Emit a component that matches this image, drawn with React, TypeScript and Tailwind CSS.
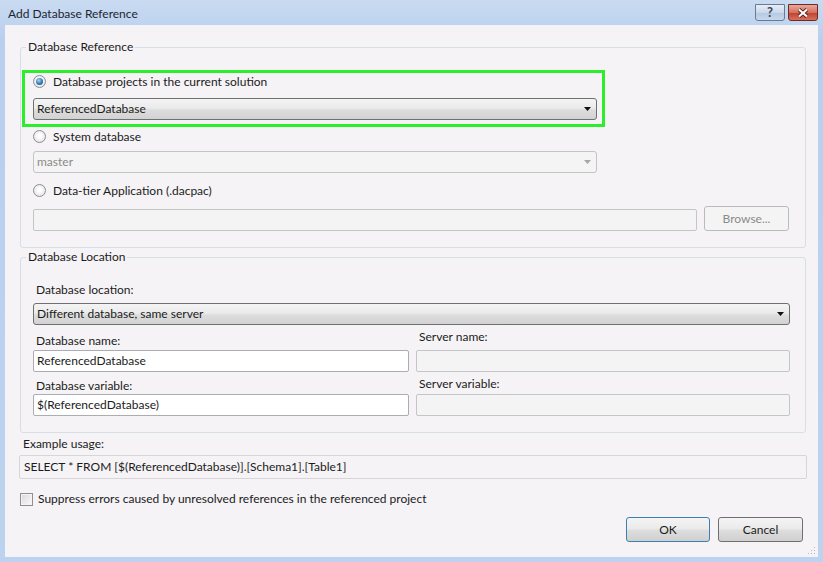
import clsx from 'clsx'

function Radio({ checked }: { checked?: boolean }) {
  return (
    <span className="flex h-[13px] w-[13px] shrink-0 items-center justify-center rounded-full border border-[#8e8f8f] bg-[radial-gradient(circle_at_50%_45%,#ffffff_20%,#d9d9d9)]">
      {checked && (
        <span className="h-[7px] w-[7px] rounded-full bg-[radial-gradient(circle_at_40%_35%,#a8d8f8,#3278b4_55%,#1c4f7e)]" />
      )}
    </span>
  )
}

function RadioRow({ label, checked }: { label: string; checked?: boolean }) {
  return (
    <div className="flex h-[17px] items-center gap-[7px]">
      <Radio checked={checked} />
      <span>{label}</span>
    </div>
  )
}

function Caret({ color }: { color: string }) {
  return (
    <svg width="7" height="4" viewBox="0 0 7 4">
      <path d="M0 0H7L3.5 4Z" fill={color} />
    </svg>
  )
}

function Combo({ text, disabled, className }: { text: string; disabled?: boolean; className?: string }) {
  return (
    <div
      className={clsx(
        'flex h-[22px] items-center justify-between rounded-[3px] border pl-[3px] pr-[5px]',
        disabled
          ? 'border-[#c2c4c6] bg-[#f4f4f4] text-[#8a8a8a]'
          : 'border-[#707070] bg-[linear-gradient(to_bottom,#f4f4f4_0%,#ebebeb_45%,#dddddd_55%,#d2d2d2_100%)]',
        className,
      )}
    >
      <span>{text}</span>
      <Caret color={disabled ? '#a6a6a6' : '#111111'} />
    </div>
  )
}

function TextBox({ value, disabled, className }: { value?: string; disabled?: boolean; className?: string }) {
  return (
    <div
      className={clsx(
        'flex h-[22px] items-center rounded-[2px] border pl-[3px]',
        disabled ? 'border-[#c3c5c8] bg-[#f4f4f5]' : 'border-[#abadb3] bg-white',
        className,
      )}
    >
      {value}
    </div>
  )
}

function Button({ label, disabled, focused, className }: { label: string; disabled?: boolean; focused?: boolean; className?: string }) {
  return (
    <div
      className={clsx(
        'flex h-[25px] items-center justify-center rounded-[3px] border',
        disabled
          ? 'border-[#b9bcbf] bg-[#f4f4f4] text-[#8a8a8a]'
          : 'bg-[linear-gradient(to_bottom,#f4f4f4_0%,#ebebeb_45%,#dddddd_55%,#d0d0d0_100%)]',
        !disabled && (focused ? 'border-[#3c7fb1]' : 'border-[#707070]'),
        className,
      )}
    >
      {label}
    </div>
  )
}

export default function App() {
  return (
    <div className="flex h-[562px] w-[823px] flex-col bg-[linear-gradient(to_bottom,#c9dbf1,#b8cfee_40px,#bcd3f0)] font-['Segoe_UI',Lato,sans-serif] text-[12px] text-[#1b1b1b]">
      {/* title bar */}
      <div className="flex h-[25px] shrink-0 items-start justify-between pl-[8px] pr-[5px]">
        <span className="mt-[6px] leading-[16px] text-[#1e2530]">Add Database Reference</span>
        <div className="mt-[4px] flex gap-[3px]">
          <div className="flex h-[17px] w-[30px] items-center justify-center rounded-b-[3px] border border-[#6b7b8e] bg-[linear-gradient(to_bottom,#e6eef8,#c9d8ea_50%,#b4c8e0_51%,#c6d8ee)] text-[13px] font-bold leading-none text-[#3a4656]">
            ?
          </div>
          <div className="flex h-[17px] w-[30px] items-center justify-center rounded-b-[3px] border border-[#6e2a22] bg-[linear-gradient(to_bottom,#e9a99b,#d4705f_50%,#c2402c_51%,#d6705c)]">
            <svg width="12" height="10" viewBox="0 0 12 10">
              <path d="M2 1.5L10 8.5M10 1.5L2 8.5" stroke="#5a2018" strokeWidth="4" />
              <path d="M2 1.5L10 8.5M10 1.5L2 8.5" stroke="#ffffff" strokeWidth="2.2" />
            </svg>
          </div>
        </div>
      </div>

      {/* client area */}
      <div className="relative mx-[5px] mb-[5px] flex flex-1 flex-col bg-[#f5f3f6] pt-[14px]">
        <fieldset className="ml-[15px] w-[786px] rounded-[3px] border border-[#d5dfe5]">
          <legend className="ml-[5px] h-[16px] px-[2px] leading-[16px]">Database Reference</legend>
          <div className="flex flex-col pb-[16px] pl-[12px] pr-[16px] pt-[15px]">
            <div className="-ml-[11px] flex w-[583px] flex-col border-[3px] border-[#2cee2c] pb-[4px] pl-[8px]">
              <RadioRow label="Database projects in the current solution" checked />
              <Combo text="ReferencedDatabase" className="mt-[8px] w-[564px]" />
            </div>
            <div className="mt-[1px]">
              <RadioRow label="System database" />
            </div>
            <Combo text="master" disabled className="mt-[6px] w-[564px]" />
            <div className="mt-[9px]">
              <RadioRow label="Data-tier Application (.dacpac)" />
            </div>
            <div className="mt-[7px] flex items-end gap-[7px]">
              <TextBox disabled className="w-[664px]" />
              <Button label="Browse..." disabled className="w-[85px]" />
            </div>
          </div>
        </fieldset>

        <fieldset className="ml-[15px] mt-[1px] w-[786px] rounded-[3px] border border-[#d5dfe5]">
          <legend className="ml-[5px] h-[16px] px-[2px] leading-[16px]">Database Location</legend>
          <div className="flex flex-col pb-[16px] pl-[12px] pr-[15px] pt-[17px]">
            <span className="h-[16px] pl-[3px] leading-[16px]">Database location:</span>
            <Combo text="Different database, same server" className="mt-[5px]" />
            <div className="grid grid-cols-[376px_374px] gap-x-[7px]">
              <div className="flex flex-col">
                <span className="mt-[8px] h-[16px] pl-[3px] leading-[16px]">Database name:</span>
                <TextBox value="ReferencedDatabase" className="mt-[1px]" />
                <span className="mt-[6px] h-[16px] pl-[3px] leading-[16px]">Database variable:</span>
                <TextBox value="$(ReferencedDatabase)" />
              </div>
              <div className="flex flex-col">
                <span className="mt-[4px] h-[16px] pl-[3px] leading-[16px]">Server name:</span>
                <TextBox disabled className="mt-[5px]" />
                <span className="mt-[4px] h-[16px] pl-[3px] leading-[16px]">Server variable:</span>
                <TextBox disabled className="mt-[2px]" />
              </div>
            </div>
          </div>
        </fieldset>

        <span className="ml-[18px] mt-[3px] h-[16px] leading-[16px]">Example usage:</span>
        <div className="ml-[14px] mt-[3px] flex h-[24px] w-[788px] items-center rounded-[2px] border border-[#d6d6d6] pl-[4px]">
          SELECT * FROM [$(ReferencedDatabase)].[Schema1].[Table1]
        </div>

        <div className="ml-[15px] mt-[12px] flex h-[16px] items-center gap-[5px]">
          <span className="h-[13px] w-[13px] border border-[#8e8f8f] bg-[linear-gradient(135deg,#d8d8d8,#fbfbfb)] shadow-[inset_0_0_0_1px_#f4f4f4]" />
          <span>Suppress errors caused by unresolved references in the referenced project</span>
        </div>

        <div className="mt-[10px] flex justify-end gap-[8px] pr-[15px]">
          <Button label="OK" focused className="w-[84px]" />
          <Button label="Cancel" className="w-[85px]" />
        </div>

        {/* size grip */}
        <svg className="absolute bottom-[2px] right-[2px]" width="8" height="8" viewBox="0 0 8 8">
          <rect x="6" y="0" width="1" height="1" fill="#b8b8b8" />
          <rect x="3" y="3" width="1" height="1" fill="#b8b8b8" />
          <rect x="6" y="3" width="1" height="1" fill="#b8b8b8" />
          <rect x="0" y="6" width="1" height="1" fill="#b8b8b8" />
          <rect x="3" y="6" width="1" height="1" fill="#b8b8b8" />
          <rect x="6" y="6" width="1" height="1" fill="#b8b8b8" />
        </svg>
      </div>
    </div>
  )
}
